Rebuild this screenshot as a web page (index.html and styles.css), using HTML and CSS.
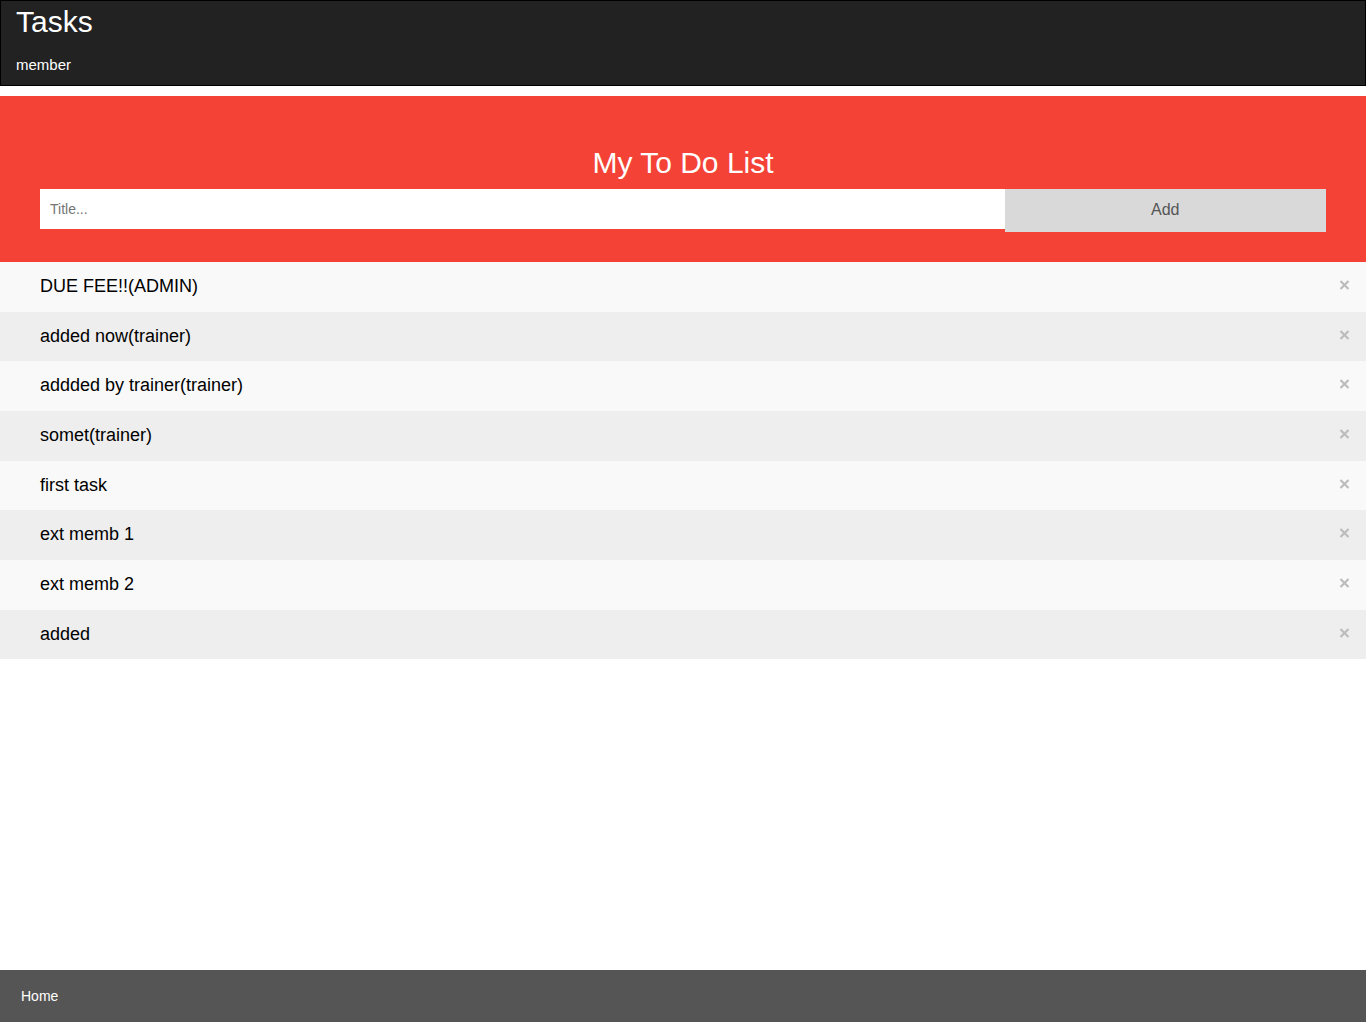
FILE: index.html
```html
<!DOCTYPE html>
<html lang="en">
<head>
<meta charset="utf-8">
<title>Tasks</title>
<link rel="stylesheet" href="styles.css">
</head>
<body>
<div class="page">
  <header class="topbar">
    <h2 class="topbar-title">Tasks</h2>
    <p class="topbar-role">member</p>
  </header>
  <main class="main">
    <section class="todo-header">
      <h2 class="todo-title">My To Do List</h2>
      <div class="todo-form">
        <input class="todo-input" type="text" placeholder="Title...">
        <span class="add-btn">Add</span>
      </div>
    </section>
    <ul class="todo-list">
      <li class="todo-item">DUE FEE!!(ADMIN)<span class="close"><svg viewBox="0 0 11 10" width="11" height="10"><path d="M1.5 1L9.5 9M9.5 1L1.5 9"/></svg></span></li>
      <li class="todo-item">added now(trainer)<span class="close"><svg viewBox="0 0 11 10" width="11" height="10"><path d="M1.5 1L9.5 9M9.5 1L1.5 9"/></svg></span></li>
      <li class="todo-item">addded by trainer(trainer)<span class="close"><svg viewBox="0 0 11 10" width="11" height="10"><path d="M1.5 1L9.5 9M9.5 1L1.5 9"/></svg></span></li>
      <li class="todo-item">somet(trainer)<span class="close"><svg viewBox="0 0 11 10" width="11" height="10"><path d="M1.5 1L9.5 9M9.5 1L1.5 9"/></svg></span></li>
      <li class="todo-item">first task<span class="close"><svg viewBox="0 0 11 10" width="11" height="10"><path d="M1.5 1L9.5 9M9.5 1L1.5 9"/></svg></span></li>
      <li class="todo-item">ext memb 1<span class="close"><svg viewBox="0 0 11 10" width="11" height="10"><path d="M1.5 1L9.5 9M9.5 1L1.5 9"/></svg></span></li>
      <li class="todo-item">ext memb 2<span class="close"><svg viewBox="0 0 11 10" width="11" height="10"><path d="M1.5 1L9.5 9M9.5 1L1.5 9"/></svg></span></li>
      <li class="todo-item">added<span class="close"><svg viewBox="0 0 11 10" width="11" height="10"><path d="M1.5 1L9.5 9M9.5 1L1.5 9"/></svg></span></li>
    </ul>
  </main>
  <footer class="footer">
    <span class="footer-link">Home</span>
  </footer>
</div>
</body>
</html>
```
FILE: styles.css
```css
* { box-sizing: border-box; }
html, body {
  margin: 0;
  padding: 0;
}
body {
  font-family: "Liberation Sans", Arial, Helvetica, sans-serif;
  font-size: 14px;
  line-height: 1.42857143;
  color: #000;
  background: #fff;
}
.page {
  display: flex;
  flex-direction: column;
  min-height: 100vh;
}
.topbar {
  background: #222;
  border: 1px solid #000;
  padding: 4px 15px 10px;
  margin-bottom: 10px;
  color: #fff;
}
.topbar-title {
  margin: 0 0 16px;
  font-size: 30px;
  font-weight: 400;
  line-height: 33px;
}
.topbar-role {
  margin: 0;
  font-size: 15px;
  line-height: 21px;
}
.main {
  flex: 1;
}
.todo-header {
  background: #f44336;
  padding: 30px 40px;
  color: #fff;
  text-align: center;
}
.todo-title {
  margin: 20px 0 10px;
  font-size: 30px;
  font-weight: 400;
  line-height: 33px;
}
.todo-form {
  display: flex;
  align-items: flex-start;
}
.todo-input {
  width: 75%;
  height: 40px;
  margin: 0;
  border: none;
  border-radius: 0;
  padding: 0 10px;
  font-family: inherit;
  font-size: 14px;
  color: #333;
  background: #fff;
  outline: none;
}
.todo-input::placeholder {
  color: #757575;
}
.add-btn {
  width: 25%;
  padding: 10px;
  background: #d9d9d9;
  color: #555;
  font-size: 16px;
  line-height: 22.857px;
  text-align: center;
}
.todo-list {
  margin: 0;
  padding: 0;
  list-style: none;
}
.todo-item {
  position: relative;
  padding: 12px 8px 12px 40px;
  background: #eee;
  font-size: 18px;
  line-height: 1.42857143;
}
.todo-item:nth-child(odd) {
  background: #f9f9f9;
}
.close {
  position: absolute;
  right: 16px;
  top: 18px;
  width: 11px;
  height: 10px;
  line-height: 0;
}
.close svg {
  display: block;
  fill: none;
  stroke: #bcbcbc;
  stroke-width: 2.2;
}
.footer {
  background: #555;
  color: #fff;
  padding: 16px 21px;
  font-size: 14px;
  line-height: 20px;
}
```
